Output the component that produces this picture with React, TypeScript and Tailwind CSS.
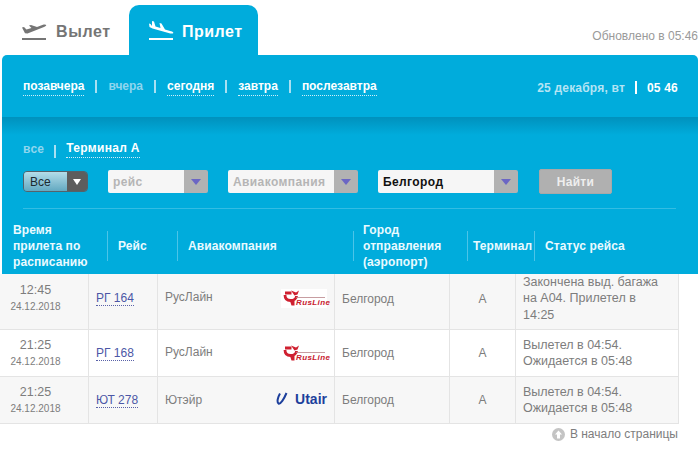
const days = [
  { label: "позавчера", link: true },
  { label: "вчера", link: false },
  { label: "сегодня", link: true },
  { label: "завтра", link: true },
  { label: "послезавтра", link: true },
];

const rows = [
  { time: "12:45", flight: "РГ 164", airline: "РусЛайн", logo: "rusline", status: "Закончена выд. багажа на А04. Прилетел в 14:25", bg: "bg-[#f7f7f7]", pad: "pb-[6px]", h: "h-[56px]" },
  { time: "21:25", flight: "РГ 168", airline: "РусЛайн", logo: "rusline", status: "Вылетел в 04:54. Ожидается в 05:48", bg: "bg-white", pad: "", h: "h-[47px]" },
  { time: "21:25", flight: "ЮТ 278", airline: "Ютэйр", logo: "utair", status: "Вылетел в 04:54. Ожидается в 05:48", bg: "bg-[#f7f7f7]", pad: "", h: "h-[47px]" },
];

function DepartureIcon() {
  return (
    <svg width="25" height="22" viewBox="0 0 25 22" className="text-[#757575]">
      <path fill="currentColor" d="M0 6.500l2-.5 2.500 2.500 5-1.600L7 4.500l2-.6 6 2 6-2.100c1.500-.5 3-.3 3.200.3.200.6-.7 1.300-2.200 1.900L5.500 12.500 3 12.300z" />
      <rect x="0" y="17" width="24" height="2" fill="currentColor" />
    </svg>
  );
}

function ArrivalIcon() {
  return (
    <svg width="25" height="22" viewBox="0 0 25 22" className="text-white">
      <path fill="currentColor" d="M3 0l2 .5 1.500 5 5 1.500L10.500 2l2 .6 3.500 6 6 1.600c1.500.4 2.500 1.100 2.300 1.800-.2.6-1.500.8-3 .4L3.500 7.500 0.500 6 0 2.500l1.500.4 1.500 2z" />
      <rect x="0" y="17" width="24" height="2" fill="currentColor" />
    </svg>
  );
}

function RusLineLogo() {
  return (
    <div className="relative flex h-[19px] w-[46px] items-center bg-white">
      <svg width="46" height="19" viewBox="0 0 46 19">
        <path fill="none" stroke="#cf2030" strokeWidth="2.800" d="M4 6c0 4 2.500 5.500 5.500 5.500 3.500 0 6-2 6-4.500M4 4h6.500" />
        <path fill="#cf2030" d="M10 1.500l5 2 3-2-1.500 4-3 1zM9 12l4.500 0 0 4.500-3 0z" />
        <rect x="15" y="8" width="29" height="0.800" fill="#b9858a" />
      </svg>
      <span className="absolute left-[15px] top-[9px] text-[8px] leading-[9px] font-bold italic tracking-[0.4px] text-[#c8202e]">RusLine</span>
    </div>
  );
}

function UtairLogo() {
  return (
    <div className="-mt-[3px] flex w-[51px] items-center justify-between">
      <svg width="12" height="13" viewBox="0 0 12 13">
        <path fill="none" stroke="#1d3f9c" strokeWidth="2" d="M4 1.500C2 5 0.500 10 2.500 11.500 4.500 12.500 8 7 10.500 1" />
      </svg>
      <span className="text-[14px] leading-[16px] font-bold text-[#1d3f9c]">Utair</span>
    </div>
  );
}

function FakeSelect({ value, className, active }: { value: string; className: string; active?: boolean }) {
  return (
    <div className={`flex h-[23px] overflow-hidden rounded-[2px] ${className}`}>
      <div className={`flex flex-1 items-center pl-[5px] text-[12px] font-bold tracking-[0.4px] bg-[#f6f6f6] ${active ? "text-[#111]" : "text-[#b5b5b5]"}`}>
        {value}
      </div>
      <div className="flex w-[24px] items-center justify-center bg-[#b2b2b2]">
        <div className="h-0 w-0 border-x-[5px] border-t-[6px] border-x-transparent border-t-[#6b66c4]" />
      </div>
    </div>
  );
}

export default function App() {
  return (
    <div className="h-[453px] w-[700px] overflow-hidden bg-white font-['Liberation_Sans',Arial,sans-serif]">
      {/* tabs */}
      <div className="flex h-[55px] items-end pt-[5px]">
        <div className="flex h-[50px] w-[129px] items-center gap-[9px] pl-[22px] pt-[4px]">
          <DepartureIcon />
          <span className="text-[16px] font-bold tracking-[0.6px] text-[#757575]">Вылет</span>
        </div>
        <div className="flex h-[50px] w-[129px] items-center gap-[8px] rounded-t-[10px] bg-[#00acdc] pl-[20px] pt-[4px]">
          <ArrivalIcon />
          <span className="text-[16px] font-bold tracking-[0.5px] text-white">Прилет</span>
        </div>
        <div className="ml-auto pb-[10px] pr-[2px] text-[12px] text-[#9a9a9a]">Обновлено в 05:46</div>
      </div>

      {/* blue panel */}
      <div className="mx-[2px] h-[219px] rounded-t-[5px] bg-[#00acdc]">
        <div className="flex h-[62px] items-center pl-[21px] pr-[20px]">
          {days.map((d, i) => (
            <div key={d.label} className="flex items-center">
              {i > 0 && <div className="mx-[11px] h-[13px] w-[2px] bg-[#a9e0f2]" />}
              <span className={`text-[12px] font-bold ${d.link ? "border-b border-dotted border-[#cfeef8] text-white" : "text-[#8fd6ee]"}`}>
                {d.label}
              </span>
            </div>
          ))}
          <div className="ml-auto flex items-center pt-[3px] text-[12px] font-bold tracking-[0.2px]">
            <span className="text-[#b4e4f4]">25 декабря, вт</span>
            <div className="mx-[10px] h-[13px] w-[2px] bg-white" />
            <span className="text-white">05 46</span>
          </div>
        </div>

        <div className="h-[157px] bg-gradient-to-b from-[#0091bd] to-[#00acdc] to-[18px] px-[21px]">
          <div className="flex h-[52px] items-end pb-[11px]">
            <span className="text-[12px] font-bold tracking-[0.3px] text-[#8fd6ee]">все</span>
            <div className="mx-[10px] h-[13px] w-[2px] bg-[#a9e0f2]" />
            <span className="border-b border-dotted border-[#cfeef8] text-[12px] font-bold tracking-[0.3px] text-white">Терминал А</span>
          </div>

          <div className="flex h-[25px] items-center">
            <div className="flex h-[21px] w-[65px] overflow-hidden rounded-[4px] border border-[#55626a]">
              <div className="flex flex-1 items-center bg-gradient-to-b from-[#b4dde9] to-[#62a9c1] pl-[6px] text-[12px] text-[#1c2a30]">Все</div>
              <div className="flex w-[20px] items-center justify-center bg-[#5d5d5d]">
                <div className="h-0 w-0 border-x-[4px] border-t-[6px] border-x-transparent border-t-white" />
              </div>
            </div>
            <FakeSelect value="рейс" className="ml-[20px] w-[100px]" />
            <FakeSelect value="Авиакомпания" className="ml-[20px] w-[130px]" />
            <FakeSelect value="Белгород" className="ml-[20px] w-[140px]" active />
            <button className="ml-[21px] h-[25px] w-[73px] rounded-[2px] border border-[#a8a8a8] bg-[#b0b0b0] text-[12px] font-bold tracking-[0.3px] text-[#eeeeee]">Найти</button>
          </div>

          <div className="mt-[14px] mr-[1px] h-px bg-[#33bde3]" />

          <div className="-ml-[12px] -mr-[21px] flex h-[65px] items-center pt-[8px] text-[12px] leading-[16px] font-bold tracking-[0.1px] text-[#eafaff]">
            <div className="w-[96px] pl-[2px] pr-[20px]">Время прилета по расписанию</div>
            <div className="flex h-[30px] w-[70px] items-center border-l border-[#4cc4e8] pl-[10px]">Рейс</div>
            <div className="flex h-[30px] w-[176px] items-center border-l border-[#4cc4e8] pl-[10px]">Авиакомпания</div>
            <div className="relative w-[114px] pl-[10px]">
              <div className="absolute left-0 top-[9px] h-[30px] w-px bg-[#4cc4e8]" />
              Город отправления (аэропорт)
            </div>
            <div className="flex h-[30px] w-[67px] items-center border-l border-[#4cc4e8] pl-[5px]">Терминал</div>
            <div className="flex h-[30px] flex-1 items-center border-l border-[#4cc4e8] pl-[10px]">Статус рейса</div>
          </div>
        </div>
      </div>

      {/* table */}
      <div className="w-[679px] text-[12px] text-[#7d7d7d]">
        {rows.map((r) => (
          <div key={r.flight} className={`flex border-b border-[#e4e4e4] ${r.bg} ${r.h}`}>
            <div className={`flex w-[89px] flex-col items-center justify-center border-r border-[#e4e4e4] pr-[17px] ${r.pad}`}>
              <span className="text-[12.5px] leading-[17px]">{r.time}</span>
              <span className="text-[10px] leading-[16px]">24.12.2018</span>
            </div>
            <div className={`flex w-[69px] items-center border-r border-[#e4e4e4] pl-[7px] ${r.pad}`}>
              <span className="border-b border-dotted border-[#5a62a8] text-[12px] leading-[14px] text-[#4c57a6]">{r.flight}</span>
            </div>
            <div className={`flex w-[177px] items-center justify-between border-r border-[#e4e4e4] pl-[7px] pr-[7px] ${r.pad}`}>
              <span className={r.logo === "rusline" ? "-mt-[3px]" : ""}>{r.airline}</span>
              {r.logo === "rusline" ? <RusLineLogo /> : <UtairLogo />}
            </div>
            <div className={`flex w-[115px] items-center border-r border-[#e4e4e4] pl-[7px] ${r.pad}`}>Белгород</div>
            <div className={`flex w-[66px] items-center justify-center border-r border-[#e4e4e4] ${r.pad}`}>А</div>
            <div className={`flex flex-1 items-center border-r border-[#e4e4e4] pl-[7px] pr-[18px] text-[12.5px] leading-[16.5px] ${r.pad}`}>{r.status}</div>
          </div>
        ))}
        <div className="flex items-center justify-end gap-[5px] pt-[1px] pr-[1px] text-[12px] leading-[18px]">
          <svg width="13" height="13" viewBox="0 0 13 13">
            <circle cx="6.500" cy="6.500" r="6.500" fill="#c4c4c4" />
            <path fill="#fff" d="M6.500 2.500L10 6.500H8v4H5v-4H3z" />
          </svg>
          В начало страницы
        </div>
      </div>
    </div>
  );
}
